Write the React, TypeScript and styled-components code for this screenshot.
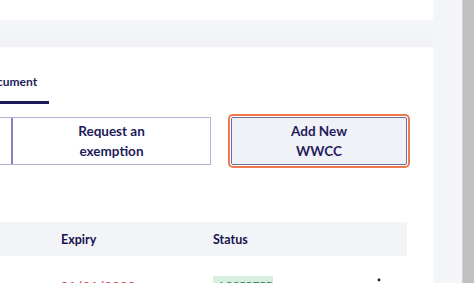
import { type FC } from 'react';
import styled, { createGlobalStyle } from 'styled-components';

const GlobalStyle = createGlobalStyle`
  html, body {
    margin: 0;
    padding: 0;
    overflow: hidden;
    background: #ffffff;
  }
  body {
    font-family: Lato, "Noto Sans", sans-serif;
    color: #1f1c5c;
  }
`;

const Page = styled.div`
  display: flex;
  width: 474px;
  height: 283px;
  overflow: hidden;
`;

const Main = styled.div`
  display: flex;
  flex-direction: column;
  width: 433px;
  flex-shrink: 0;
`;

const TopSpace = styled.div`
  height: 20px;
  background: #ffffff;
`;

const Band = styled.div`
  height: 27px;
  background: linear-gradient(180deg, #f6f7fa, #f1f2f7);
`;

const Card = styled.div`
  flex: 1;
  background: #ffffff;
  padding: 0 26px 0 0;
  overflow: hidden;
`;

const Side = styled.div`
  width: 29px;
  flex-shrink: 0;
  background: #f4f5f9;
`;

const Scrollbar = styled.div`
  width: 12px;
  flex-shrink: 0;
  background: #c1c1c1;
  border-left: 1px solid #cfcfd2;
`;

const Tabs = styled.div`
  display: flex;
  margin: 26px 0 0 -31px;
`;

const Tab = styled.div<{ $active?: boolean }>`
  padding: 0 12px 10px;
  font-size: 12px;
  line-height: 18px;
  font-weight: 700;
  color: #1f1c5c;
  white-space: nowrap;
  border-bottom: 3px solid ${(p) => (p.$active ? '#1c1a58' : 'transparent')};
`;

const Actions = styled.div`
  display: flex;
  align-items: center;
  gap: 20px;
  margin: 13px 0 0 -188px;
`;

const Group = styled.div`
  display: flex;
  border: 1px solid #b3b2d3;
  border-left: none;
`;

const SegButton = styled.button<{ $divider?: boolean }>`
  width: 199px;
  height: 46px;
  padding: 0 10px;
  border: none;
  border-left: 2px solid ${(p) => (p.$divider ? '#8583c6' : '#b3b2d3')};
  background: #ffffff;
  font-family: Lato, "Noto Sans", sans-serif;
  font-size: 13.5px;
  line-height: 20px;
  font-weight: 700;
  color: #1f1c5c;
  text-align: center;
`;

const AddButton = styled.button`
  width: 177px;
  height: 48px;
  padding: 0 10px;
  border: 1px solid #6f6f9e;
  border-radius: 2px;
  background: #f1f1f8;
  box-shadow: 0 0 0 1px #ffffff, 0 0 0 3px #f07a4c;
  font-family: Lato, "Noto Sans", sans-serif;
  font-size: 13.5px;
  line-height: 20px;
  font-weight: 700;
  color: #1f1c5c;
  text-align: center;
`;

const Table = styled.div`
  margin-top: 57px;
`;

const Row = styled.div<{ $head?: boolean }>`
  display: grid;
  grid-template-columns: 61px 152px 1fr 30px;
  align-items: center;
  height: ${(p) => (p.$head ? '34px' : 'auto')};
  padding: ${(p) => (p.$head ? '0' : '20px 0')};
  background: ${(p) => (p.$head ? '#f3f4f7' : '#ffffff')};
`;

const HeadCell = styled.div`
  font-size: 12.5px;
  font-weight: 700;
  color: #17134f;
`;

const DateCell = styled.div`
  font-size: 12px;
  line-height: 18px;
  font-weight: 700;
  letter-spacing: 0.8px;
  color: #d0454c;
`;

const Badge = styled.span`
  display: inline-block;
  width: 60px;
  height: 20px;
  box-sizing: border-box;
  padding-left: 5px;
  background: #d8efdf;
  color: #3e8b5b;
  font-size: 9.5px;
  line-height: 20px;
  font-weight: 700;
  letter-spacing: 1px;
  text-transform: uppercase;
  vertical-align: top;
`;

const Kebab = styled.div`
  display: flex;
  justify-content: flex-start;
`;

const KebabIcon: FC = () => (
  <svg width="4" height="16" viewBox="0 0 4 16" aria-hidden="true">
    <circle cx="2" cy="2" r="1.4" fill="#1a1a2e" />
    <circle cx="2" cy="8" r="1.4" fill="#1a1a2e" />
    <circle cx="2" cy="14" r="1.4" fill="#1a1a2e" />
  </svg>
);

const App: FC = () => {
  return (
    <>
      <GlobalStyle />
      <Page>
        <Main>
          <TopSpace />
          <Band />
          <Card>
            <Tabs>
              <Tab $active>Document</Tab>
            </Tabs>
            <Actions>
              <Group>
                <SegButton>Upload a document</SegButton>
                <SegButton $divider>
                  Request an
                  <br />
                  exemption
                </SegButton>
              </Group>
              <AddButton>
                Add New
                <br />
                WWCC
              </AddButton>
            </Actions>
            <Table>
              <Row $head>
                <div />
                <HeadCell>Expiry</HeadCell>
                <HeadCell>Status</HeadCell>
                <div />
              </Row>
              <Row>
                <div />
                <DateCell>01/01/2023</DateCell>
                <div>
                  <Badge>Accepted</Badge>
                </div>
                <Kebab>
                  <KebabIcon />
                </Kebab>
              </Row>
            </Table>
          </Card>
        </Main>
        <Side />
        <Scrollbar />
      </Page>
    </>
  );
};

export default App;
